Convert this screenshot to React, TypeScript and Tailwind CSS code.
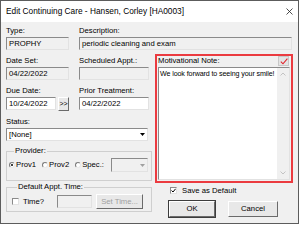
import React from 'react';

const sunken = 'border border-t-[#8a8a8a] border-l-[#8a8a8a] border-b-[#e2e2e2] border-r-[#e2e2e2]';
const raised = 'border border-t-white border-l-white border-b-[#6a6a6a] border-r-[#6a6a6a] bg-[#e8e8e8]';

const Field: React.FC<{ label: string; value?: string; enabled?: boolean; className?: string }> = ({ label, value, enabled, className }) => (
  <div className={className}>
    <div className="h-[10px] leading-[10px] mb-[1px]">{label}</div>
    <div className={`h-[13px] leading-[11px] pl-[2px] ${sunken} ${enabled ? 'bg-white' : 'bg-[#f0f0f0]'}`}>{value}</div>
  </div>
);

const Radio: React.FC<{ checked?: boolean }> = ({ checked }) => (
  <span className="w-[6px] h-[6px] rounded-full border border-t-[#7a7a7a] border-l-[#7a7a7a] border-b-[#e8e8e8] border-r-[#e8e8e8] bg-white flex items-center justify-center shrink-0">
    {checked && <span className="w-[2px] h-[2px] rounded-full bg-black" />}
  </span>
);

const Arrow: React.FC<{ color?: string }> = ({ color = '#000' }) => (
  <svg width="5" height="3" viewBox="0 0 5 3"><path d="M0 0h5L2.5 3z" fill={color} /></svg>
);

export default function App() {
  return (
    <div className="w-[300px] h-[225px] bg-white font-['Liberation_Sans',Arial,sans-serif] text-[7.7px] text-black">
      <div className="w-[299px] h-[224px] border border-[#5c5c5c] flex flex-col bg-[#f0f0f0]">
        <div className="h-[21px] bg-white flex items-center justify-between pl-[5px] pr-[5px] shrink-0">
          <span className="text-[8.3px]">Edit Continuing Care - Hansen, Corley [HA0003]</span>
          <svg width="7" height="7" viewBox="0 0 7 7">
            <path d="M0.5 0.5L6.5 6.5M6.5 0.5L0.5 6.5" stroke="#222" strokeWidth="0.8" />
          </svg>
        </div>

        <div className="px-[5px] pt-[4px]">
          <div className="flex gap-[10px]">
            <Field label="Type:" value="PROPHY" className="w-[63px]" />
            <Field label="Description:" value="periodic cleaning and exam" className="w-[213px]" />
          </div>

          <div className="flex gap-[3px] mt-[4px] items-start">
            <div className="w-[146px] pt-[2px] flex flex-col">
              <div className="flex gap-[10px]">
                <Field label="Date Set:" value="04/22/2022" className="w-[63px]" />
                <Field label="Scheduled Appt.:" className="w-[70px]" />
              </div>

              <div className="flex gap-[10px] mt-[6px]">
                <div className="w-[63px]">
                  <div className="h-[10px] leading-[10px] mb-[1px]">Due Date:</div>
                  <div className="flex gap-[2px] items-start">
                    <div className={`w-[50px] h-[13px] leading-[11px] pl-[2px] bg-white ${sunken}`}>10/24/2022</div>
                    <div className={`w-[11px] h-[14px] leading-[12px] text-center text-[7px] ${raised}`}>&gt;&gt;</div>
                  </div>
                </div>
                <Field label="Prior Treatment:" value="04/22/2022" enabled className="w-[70px]" />
              </div>

              <div className="mt-[6px]">
                <div className="h-[10px] leading-[10px] mb-[1px]">Status:</div>
                <div className={`w-[142px] h-[13px] bg-white flex items-center justify-between pl-[2px] pr-[2px] ${sunken}`}>
                  <span className="leading-[11px]">[None]</span>
                  <Arrow />
                </div>
              </div>

              <fieldset className="mt-[5px] border border-[#cfcfcf] w-[146px] pl-[2px] pr-[3px] pt-[2px] pb-[8px]">
                <legend className="ml-[5px] px-[1px] leading-[10px]">Provider:</legend>
                <div className="flex items-center h-[14px]">
                  <Radio checked />
                  <span className="ml-[1px] mr-[6px]">Prov1</span>
                  <Radio />
                  <span className="ml-[1px] mr-[6px]">Prov2</span>
                  <Radio />
                  <span className="ml-[1px]">Spec.:</span>
                  <div className={`ml-auto w-[37px] h-[14px] bg-[#f0f0f0] flex items-center justify-end pr-[2px] ${sunken}`}>
                    <Arrow color="#a0a0a0" />
                  </div>
                </div>
              </fieldset>

              <fieldset className="mt-[1px] border border-[#cfcfcf] w-[146px] pl-[5px] pt-[2px] pb-[2px]">
                <legend className="ml-[5px] px-[1px] leading-[10px]">Default Appt. Time:</legend>
                <div className="flex items-center h-[15px]">
                  <span className={`w-[7px] h-[7px] bg-white ${sunken}`} />
                  <span className="ml-[4px]">Time?</span>
                  <div className={`ml-[13px] w-[35px] h-[13px] bg-[#f0f0f0] ${sunken}`} />
                  <div className={`ml-[4px] w-[47px] h-[15px] leading-[13px] text-center text-[#a0a0a0] ${raised}`}>Set Time...</div>
                </div>
              </fieldset>
            </div>

            <div className="w-[138px] flex flex-col">
              <div className="h-[129px] border-2 border-[#eb3b40] flex flex-col">
                <div className="h-[10px] flex items-center justify-between pl-[1px] pr-[2px]">
                  <span>Motivational Note:</span>
                  <span className="w-[11px] h-[10px] bg-[#e4e4e4] border border-[#c8c8c8] flex items-center justify-center">
                    <svg width="8" height="7" viewBox="0 0 8 7">
                      <path d="M0.8 3.6L3 5.8L7.4 0.6" stroke="#e2242b" strokeWidth="1.1" fill="none" />
                    </svg>
                  </span>
                </div>
                <div className={`mt-[1px] mx-[1px] flex-1 mb-[1px] bg-white flex ${sunken}`}>
                  <div className="flex-1 min-w-0 pl-[1px] pt-[1px] leading-[10px] whitespace-nowrap text-[7.1px] tracking-[-0.1px]">We look forward to seeing your smile!</div>
                  <div className="w-[12px] shrink-0 bg-[#f0f0f0] flex flex-col items-center justify-between py-[4px]">
                    <svg width="6" height="4" viewBox="0 0 6 4"><path d="M0.5 3.5L3 1L5.5 3.5" stroke="#b8b8b8" strokeWidth="0.8" fill="none" /></svg>
                    <svg width="6" height="4" viewBox="0 0 6 4"><path d="M0.5 0.5L3 3L5.5 0.5" stroke="#b8b8b8" strokeWidth="0.8" fill="none" /></svg>
                  </div>
                </div>
              </div>

              <div className="flex items-center mt-[3px] pl-[15px] h-[9px]">
                <span className={`w-[7px] h-[7px] bg-white flex items-center justify-center ${sunken}`}>
                  <svg width="5" height="5" viewBox="0 0 5 5"><path d="M0.5 2.5L2 4L4.6 0.8" stroke="#000" strokeWidth="1" fill="none" /></svg>
                </span>
                <span className="ml-[5px]">Save as Default</span>
              </div>

              <div className="flex mt-[6px] pl-[14px] gap-[13px]">
                <div className={`w-[46px] h-[16px] leading-[14px] text-center outline outline-1 outline-[#3c3c3c] ${raised}`}>OK</div>
                <div className={`w-[50px] h-[16px] leading-[14px] text-center ${raised}`}>Cancel</div>
              </div>
            </div>
          </div>
        </div>
      </div>
    </div>
  );
}
